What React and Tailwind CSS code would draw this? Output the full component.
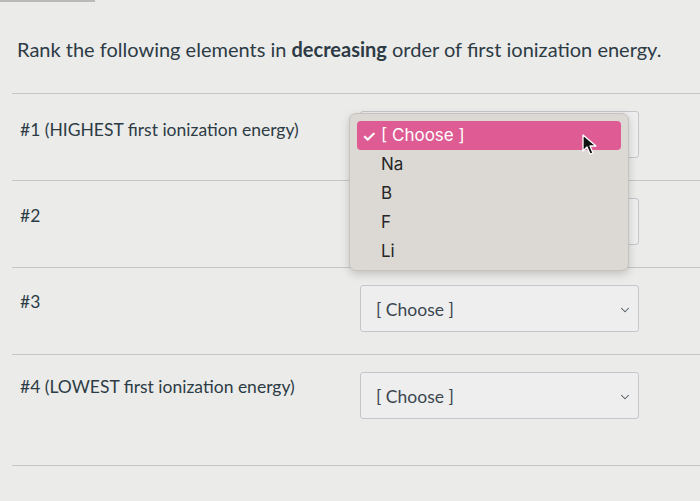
import { ChevronDown } from "lucide-react";

// ─── Data ─────────────────────────────────────────────────────────────────────
const ROWS = [
  { label: "#1 (HIGHEST first ionization energy)", labelPad: "pt-[7px]", pb: "pb-[22px]" },
  { label: "#2", labelPad: "pt-[6px]", pb: "pb-[22px]" },
  { label: "#3", labelPad: "pt-[5px]", pb: "pb-[22px]" },
  { label: "#4 (LOWEST first ionization energy)", labelPad: "pt-[3px]", pb: "pb-[46px]" },
];

const OPTIONS = ["Na", "B", "F", "Li"];

function SelectBox() {
  return (
    <div className="w-[279px] h-[47px] flex items-center justify-between pl-[15px] pr-[6px] pt-[3px] rounded-[3px] border border-[#c3c7ca] bg-[#eeeeee]">
      <span className="text-[17.5px] text-[#3b4650]">[ Choose ]</span>
      <ChevronDown size={14} strokeWidth={1.8} className="text-[#4f5a64]" />
    </div>
  );
}

function Cursor() {
  return (
    <svg width="16" height="22" viewBox="0 0 16 22" className="absolute left-[582px] top-[134px]">
      <path
        d="M1 1 L1 17 L5 13 L8 20 L11 19 L8 12 L14 12 Z"
        fill="#111"
        stroke="#fff"
        strokeWidth="1.3"
        strokeLinejoin="round"
      />
    </svg>
  );
}

export default function App() {
  return (
    <div
      className="relative w-[700px] h-[501px] overflow-hidden bg-[#ebebea] text-[#2d3b45]"
      style={{ fontFamily: "Lato, 'Open Sans', sans-serif" }}
    >
      <div className="h-[2px] w-[95px] bg-[#b9b9b9]" />

      {/* Question */}
      <p className="pt-[32px] pl-[17px] h-[91px] text-[20px]">
        Rank the following elements in <span className="font-bold">decreasing</span> order of first ionization energy.
      </p>

      {/* Answer rows */}
      <div className="pl-[12px]">
        {ROWS.map((row) => (
          <div key={row.label} className={`flex items-start border-t border-[#c5c5c5] pt-[17px] ${row.pb}`}>
            <div className={`w-[348px] pl-[8px] text-[17.5px] leading-[24px] ${row.labelPad}`}>{row.label}</div>
            <SelectBox />
          </div>
        ))}
        <div className="border-t border-[#c5c5c5]" />
      </div>

      {/* Open dropdown menu */}
      <div
        className="absolute left-[349px] top-[113px] w-[280px] h-[158px] rounded-[7px] border border-[#c6c3bf] bg-[#dcd9d5] shadow-[0_3px_8px_rgba(0,0,0,0.18)] px-[7px] pt-[7px]"
        style={{ fontFamily: "Inter, 'Liberation Sans', sans-serif" }}
      >
        <div className="h-[29px] flex items-center rounded-[4px] bg-[#de5b93] text-white text-[17px]">
          <span className="w-[24px] pl-[5px] text-[16px] font-semibold">✓</span>
          <span>[ Choose ]</span>
        </div>
        {OPTIONS.map((o) => (
          <div key={o} className="h-[29px] flex items-center pl-[24px] text-[17px] text-[#262626]">
            {o}
          </div>
        ))}
      </div>

      <Cursor />
    </div>
  );
}
